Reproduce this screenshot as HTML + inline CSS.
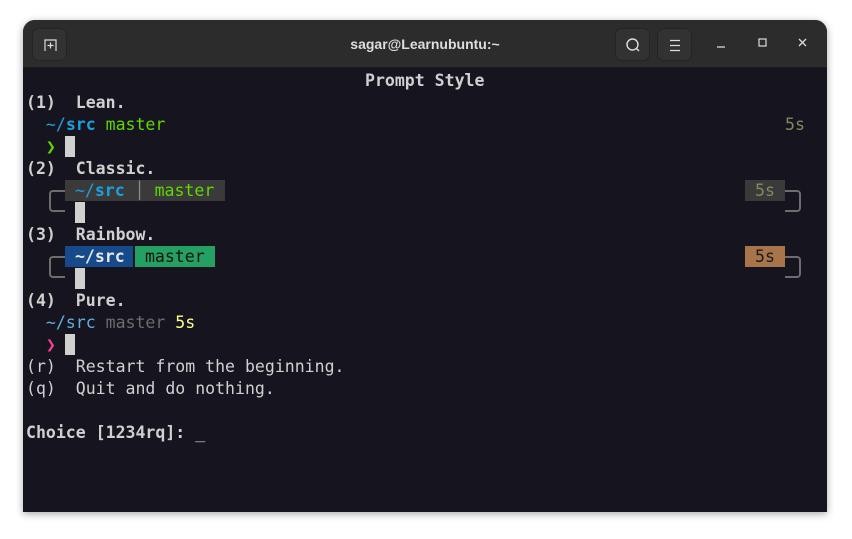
<!DOCTYPE html>
<html><head><style>
*{margin:0;padding:0;box-sizing:border-box}
body{width:852px;height:539px;background:#fff;position:relative;overflow:hidden;font-family:"DejaVu Sans Mono","Liberation Mono",monospace}
.win{position:absolute;left:23px;top:20px;width:804px;height:492px;border-radius:12px 12px 0 0;background:#16151f;overflow:hidden;box-shadow:0 2px 8px rgba(0,0,0,.35)}
.tb{position:absolute;left:0;top:0;width:804px;height:48px;background:#2c2c2c;border-bottom:1px solid #1d1d1d}
.btn{position:absolute;top:8px;width:35px;height:33px;border-radius:7px;background:#323232;border:1px solid #242424}
.title{position:absolute;left:0;width:804px;top:16px;text-align:center;color:#dedede;font:bold 14px "Liberation Sans",sans-serif}
.l{position:absolute;left:3px;height:22px;line-height:22px;font-size:16.55px;color:#d0d0d0;white-space:pre}
.b{font-weight:bold}
.cur{position:absolute;width:10px;height:21px;background:#d0d0ce}
.seg{position:absolute;height:21px;line-height:21px;font-size:16.55px;white-space:pre}
.brl{position:absolute;width:16px;height:22px;border:2px solid #6d6d6d;border-right:none;border-radius:4px 0 0 4px}
.brr{position:absolute;width:16px;height:22px;border:2px solid #6d6d6d;border-left:none;border-radius:0 4px 4px 0}
</style></head><body>
<div class="win">
 <div class="tb">
  <div class="btn" style="left:9px"><svg width="35" height="33"><path d="M12 22 V11 H23 V22 M17.5 13.5 v6 M14.5 16.5 h6" stroke="#ddd" fill="none" stroke-width="1.2"/></svg></div>
  <div class="title">sagar@Learnubuntu:~</div>
  <div class="btn" style="left:592px"><svg width="35" height="33"><circle cx="16.5" cy="15.5" r="5.5" stroke="#ddd" fill="none" stroke-width="1.4"/><path d="M20.5 19.5 L23 22" stroke="#ddd" stroke-width="1.4"/></svg></div>
  <div class="btn" style="left:634px"><svg width="35" height="33"><path d="M12 11.5h10M12 16.5h10M12 21.5h10" stroke="#ddd" stroke-width="1.2"/></svg></div>
  <svg style="position:absolute;left:690px;top:14px" width="100" height="20"><path d="M4 13h8" stroke="#ddd" stroke-width="1.3"/><rect x="46" y="5" width="7" height="7" stroke="#ddd" fill="none" stroke-width="1.2"/><path d="M86 5l7 7M93 5l-7 7" stroke="#ddd" stroke-width="1.3"/></svg>
 </div>
 <div class="l b" style="top:50px;left:342px">Prompt Style</div>
 <div class="l b" style="top:72px">(1)  Lean.</div>
 <div class="l" style="top:94px">  <span style="color:#1ba0e0">~/</span><span style="color:#1ba0e0" class="b">src</span> <span style="color:#5fd700">master</span></div>
 <div class="l" style="top:94px;left:762px;color:#87875f">5s</div>
 <div class="l b" style="top:116px;color:#5fd700">  ❯</div>
 <div class="cur" style="left:42px;top:116px"></div>
 <div class="l b" style="top:138px">(2)  Classic.</div>
 <div class="brl" style="left:26px;top:170px"></div>
 <div class="seg" style="left:42px;top:160px;width:160px;background:#3a3a3a"> <span style="color:#1ba0e0">~/</span><span class="b" style="color:#1ba0e0">src</span> <span style="color:#8a8a8a">│</span> <span style="color:#5fd700">master</span></div>
 <div class="seg" style="left:722px;top:160px;width:40px;background:#3a3a3a;color:#87875f;text-align:center">5s</div>
 <div class="brr" style="left:762px;top:170px"></div>
 <div class="cur" style="left:52px;top:182px"></div>
 <div class="l b" style="top:204px">(3)  Rainbow.</div>
 <div class="brl" style="left:26px;top:236px"></div>
 <div class="seg b" style="left:42px;top:226px;width:68px;background:#174a8a;color:#e8e8e8"> ~/src</div>
 <div class="seg" style="left:112px;top:226px;width:80px;background:#24a062;color:#111"> master</div>
 <div class="seg" style="left:722px;top:226px;width:40px;background:#a8744a;color:#1a1a1a;text-align:center">5s</div>
 <div class="brr" style="left:762px;top:236px"></div>
 <div class="cur" style="left:52px;top:248px"></div>
 <div class="l b" style="top:270px">(4)  Pure.</div>
 <div class="l" style="top:292px">  <span style="color:#5fafe0">~/src</span> <span style="color:#6c6c6c">master</span> <span style="color:#ffff87">5s</span></div>
 <div class="l b" style="top:314px;color:#ff3c9a">  ❯</div>
 <div class="cur" style="left:42px;top:314px"></div>
 <div class="l" style="top:336px">(r)  Restart from the beginning.</div>
 <div class="l" style="top:358px">(q)  Quit and do nothing.</div>
 <div class="l b" style="top:402px">Choice [1234rq]: <span style="font-weight:normal">_</span></div>
</div>
</body></html>
